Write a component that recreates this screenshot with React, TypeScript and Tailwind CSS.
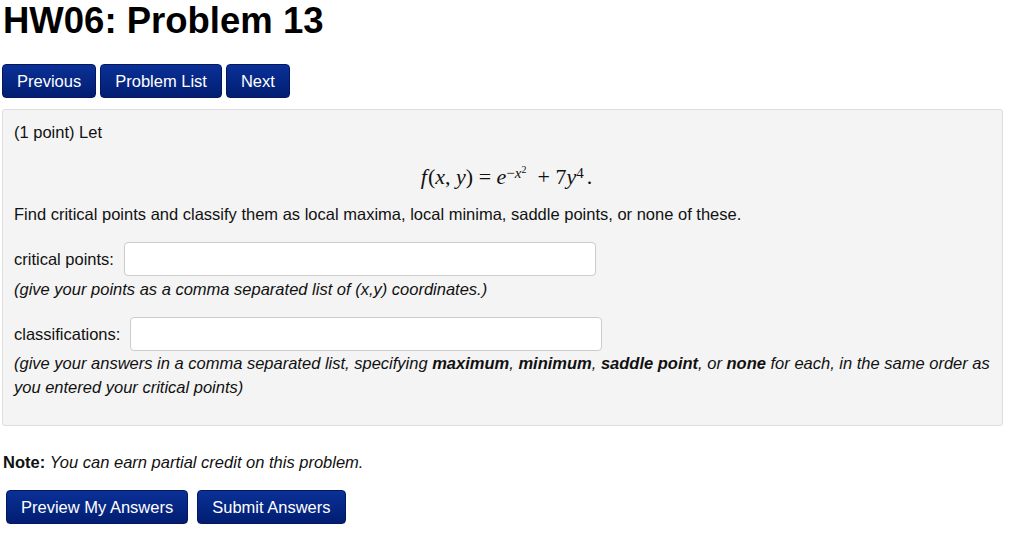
import React from 'react';

const btn =
  'h-[34px] rounded-[4px] border border-[#06175e] bg-gradient-to-b from-[#0b3197] to-[#021d72] px-[14px] text-[16.5px] text-white';

export default function App() {
  return (
    <div className="min-h-[535px] bg-white font-['Liberation_Sans',Arial,sans-serif] text-[#111]">
      <h1 className="pl-[3px] pt-[2px] text-[36.5px] font-bold leading-[38px] text-black">HW06: Problem 13</h1>

      {/* Navigation */}
      <div className="mt-[24px] flex gap-[4px] pl-[2px]">
        <button className={btn}>Previous</button>
        <button className={btn}>Problem List</button>
        <button className={btn}>Next</button>
      </div>

      {/* Problem body */}
      <div className="ml-[2px] mt-[11px] w-[1001px] rounded-[3px] border border-[#dddddd] bg-[#f4f4f4] px-[11px] pb-[26px] pt-[11px] text-[16.5px]">
        <p className="leading-[22px]">(1 point) Let</p>

        <div className="mt-[20px] flex h-[28px] items-end justify-center pl-[8px] font-['Liberation_Serif','Times_New_Roman',serif] text-[22px] italic leading-[28px]">
          <span>f</span>
          <span className="pl-[1px] not-italic">(</span>
          <span>x</span>
          <span className="not-italic">,&nbsp;</span>
          <span>y</span>
          <span className="not-italic">)</span>
          <span className="not-italic">&nbsp;=&nbsp;</span>
          <span>e</span>
          <span className="relative -top-[10px] text-[15px] leading-none">
            <span className="not-italic">−</span>x
            <span className="relative -top-[5px] text-[10px] not-italic">2</span>
          </span>
          <span className="not-italic">&nbsp;&nbsp;+ 7</span>
          <span>y</span>
          <span className="relative -top-[10px] text-[15px] not-italic leading-none">4</span>
          <span className="pl-[3px] not-italic">.</span>
        </div>

        <p className="mt-[12px] leading-[22px]">
          Find critical points and classify them as local maxima, local minima, saddle points, or none of these.
        </p>

        <div className="mt-[17px] flex h-[34px] items-center">
          <span>critical points:</span>
          <input className="ml-[10px] h-[34px] w-[472px] rounded-[4px] border border-[#cccccc] bg-white" />
        </div>
        <p className="mt-[2px] italic leading-[22px]">
          (give your points as a comma separated list of (x,y) coordinates.)
        </p>

        <div className="mt-[17px] flex h-[34px] items-center">
          <span>classifications:</span>
          <input className="ml-[10px] h-[34px] w-[472px] rounded-[4px] border border-[#cccccc] bg-white" />
        </div>
        <p className="italic leading-[24px]">
          (give your answers in a comma separated list, specifying <b>maximum</b>, <b>minimum</b>,{' '}
          <b>saddle point</b>, or <b>none</b> for each, in the same order as you entered your critical points)
        </p>
      </div>

      <p className="mt-[25px] pl-[3px] text-[16.5px] leading-[22px]">
        <b>Note:</b> <i>You can earn partial credit on this problem.</i>
      </p>

      <div className="mt-[17px] flex gap-[9px] pl-[6px]">
        <button className={btn}>Preview My Answers</button>
        <button className={btn}>Submit Answers</button>
      </div>
    </div>
  );
}
